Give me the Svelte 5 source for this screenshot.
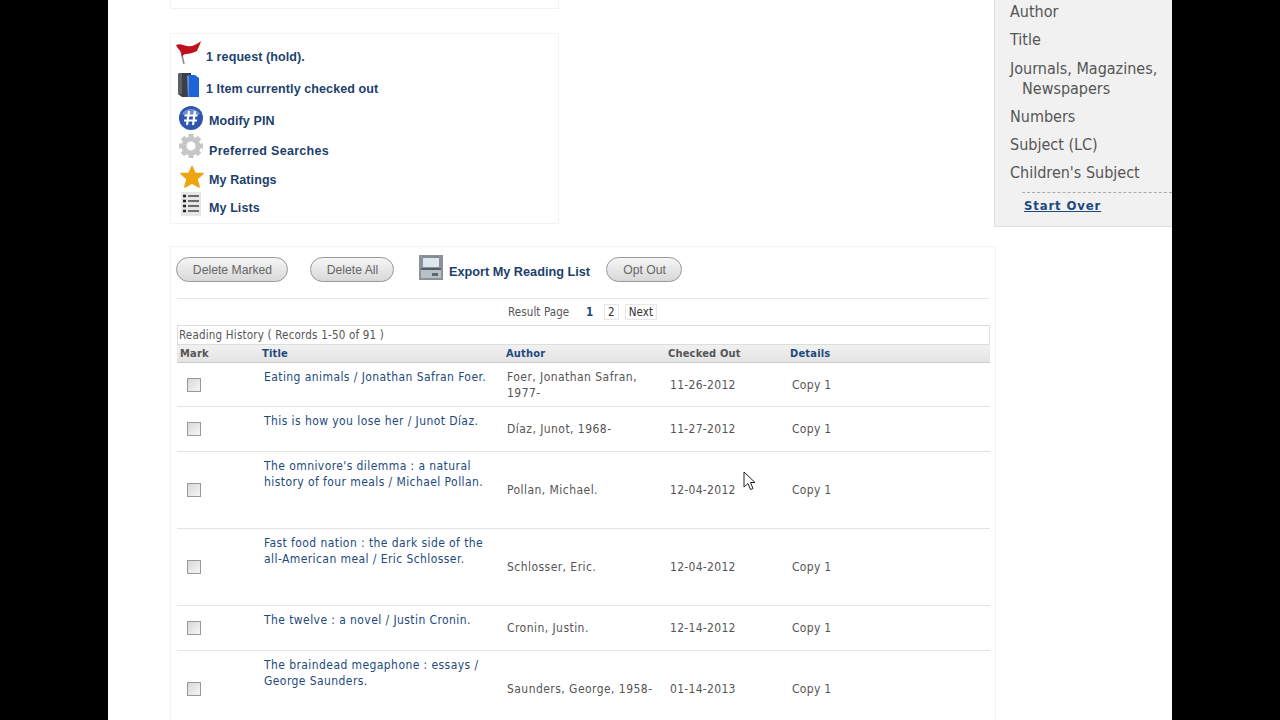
<script>
  const links = [
    { icon: 'flag', text: '1 request (hold).' },
    { icon: 'books', text: '1 Item currently checked out' },
    { icon: 'hash', text: 'Modify PIN' },
    { icon: 'gear', text: 'Preferred Searches' },
    { icon: 'star', text: 'My Ratings' },
    { icon: 'list', text: 'My Lists' }
  ];

  const rows = [
    { title: 'Eating animals / Jonathan Safran Foer.', author: 'Foer, Jonathan Safran, 1977-', date: '11-26-2012', size: 'r1' },
    { title: 'This is how you lose her / Junot Díaz.', author: 'Díaz, Junot, 1968-', date: '11-27-2012', size: 'r2' },
    { title: "The omnivore's dilemma : a natural history of four meals / Michael Pollan.", author: 'Pollan, Michael.', date: '12-04-2012', size: 'r3' },
    { title: 'Fast food nation : the dark side of the all-American meal / Eric Schlosser.', author: 'Schlosser, Eric.', date: '12-04-2012', size: 'r3' },
    { title: 'The twelve : a novel / Justin Cronin.', author: 'Cronin, Justin.', date: '12-14-2012', size: 'r2' },
    { title: 'The braindead megaphone : essays / George Saunders.', author: 'Saunders, George, 1958-', date: '01-14-2013', size: 'r3' }
  ];

  const searches = ['Author', 'Title', 'Journals, Magazines, Newspapers', 'Numbers', 'Subject (LC)', "Children's Subject"];
</script>

<div class="page">
  <div class="bar"></div>

  <main>
    <div class="content">
      <div class="card top-card">
        <span>Hello, Jay</span>
      </div>

      <ul class="card links">
        {#each links as link}
          <li>
            <span class="icon">
              {#if link.icon === 'flag'}
                <svg viewBox="0 0 26 24" width="26" height="24">
                  <path d="M5 10 8 23" stroke="#8f8f86" stroke-width="1.600" fill="none"/>
                  <path d="M0 4C4 2 7 4 11 5c5 1 9-1 14-5-1 4-3 7-4 10-4 2-8 3-11 3-2 0-3 1-4 3l-1-5C3 9 1 6 0 4z" fill="#c0101c"/>
                </svg>
              {:else if link.icon === 'books'}
                <svg viewBox="0 0 24 24" width="24" height="24">
                  <path d="M1 2q0-2 2-2h11v24H5l-4-3z" fill="#3c3f47"/>
                  <path d="M1 2q0-2 2-2h2v21H1z" fill="#5c5f66"/>
                  <path d="M10 3q0-1 1-1h7l4 3v19H11z" fill="#1f63d8"/>
                  <path d="M10 3h2v21h-1z" fill="#6d8fc8"/>
                </svg>
              {:else if link.icon === 'hash'}
                <svg viewBox="0 0 24 24" width="24" height="24">
                  <circle cx="12" cy="12" r="12" fill="#2f55b0"/>
                  <path d="M3 8a10 9 0 0 1 18 0c-5 2-13 2-18 0z" fill="#6f8fd6"/>
                  <path d="M10 5 8 19M16 5l-2 14M5.500 9.500h13M5 14.500h13" stroke="#fff" stroke-width="2.200" fill="none"/>
                </svg>
              {:else if link.icon === 'gear'}
                <svg viewBox="0 0 24 24" width="24" height="24">
                  <circle cx="12" cy="12" r="7" fill="none" stroke="#c6c6c6" stroke-width="5"/>
                  <path d="M12 0v5M12 19v5M0 12h5M19 12h5M3.500 3.500 7 7M17 17l3.500 3.500M20.500 3.500 17 7M7 17l-3.500 3.500" stroke="#c6c6c6" stroke-width="5" fill="none"/>
                </svg>
              {:else if link.icon === 'star'}
                <svg viewBox="0 0 24 24" width="24" height="24">
                  <path d="M12 1.500l3.200 7H23l-6 5.500 2.200 8L12 18l-7.200 4 2.200-8-6-5.500h7.800z" fill="#eba510" stroke="#eba510" stroke-width="1.500" stroke-linejoin="round"/>
                </svg>
              {:else}
                <svg viewBox="0 0 20 24" width="20" height="24">
                  <rect width="20" height="24" fill="#e6e6e6"/>
                  <path d="M7 4h11M7 9h11M7 14h11M7 19h11" stroke="#444" stroke-width="1.600"/>
                  <path d="M2 4h3M2 9h3M2 14h3M2 19h3" stroke="#222" stroke-width="2.600"/>
                </svg>
              {/if}
            </span>
            <a href="#top">{link.text}</a>
          </li>
        {/each}
      </ul>

      <section class="card history">
        <div class="actions">
          <button class="del-marked">Delete Marked</button>
          <button class="del-all">Delete All</button>
          <a href="#top" class="export">
            <svg viewBox="0 0 24 25" width="24" height="25">
              <rect width="24" height="25" fill="#8a939b"/>
              <rect x="4" y="1" width="16" height="11" fill="#dfe6ec"/>
              <rect x="4" y="1" width="16" height="2" fill="#7f8c98"/>
              <rect x="2" y="13" width="20" height="2" fill="#55606a"/>
              <rect x="2" y="15" width="20" height="8" fill="#b9c0c6"/>
              <rect x="13" y="18" width="6" height="3" fill="#5d6770"/>
            </svg>
            <span>Export My Reading List</span>
          </a>
          <button class="opt-out">Opt Out</button>
        </div>

        <div class="pager">
          <span class="result-label">Result Page</span>
          <span class="cur">1</span>
          <a href="#top" class="pg">2</a>
          <a href="#top" class="pg">Next</a>
        </div>

        <div class="caption">Reading History ( Records 1-50 of 91 )</div>

        <div class="grid head">
          <span>Mark</span>
          <a href="#top">Title</a>
          <a href="#top">Author</a>
          <span>Checked Out</span>
          <a href="#top">Details</a>
        </div>

        {#each rows as row}
          <div class="grid row {row.size}">
            <span class="check"><input type="checkbox" /></span>
            <a href="#top" class="title">{row.title}</a>
            <span class="author">{row.author}</span>
            <span class="plain">{row.date}</span>
            <span class="plain">Copy 1</span>
          </div>
        {/each}
      </section>
    </div>

    <aside>
      <ul>
        {#each searches as s}
          <li>{s}</li>
        {/each}
      </ul>
      <div class="over"><a href="#top">Start Over</a></div>
    </aside>

    <svg class="cursor" viewBox="0 0 13 20" width="13" height="20">
      <path d="M1 1v15l4-3.500 2.500 6 2.500-1-2.500-6H12z" fill="#fff" stroke="#222" stroke-width="1"/>
    </svg>
  </main>

  <div class="bar"></div>
</div>

<style>
  :global(body) {
    margin: 0;
    background: #000;
  }
  .page {
    display: grid;
    grid-template-columns: 108px 1fr 108px;
    height: 720px;
    overflow: hidden;
  }
  .bar {
    background: #000;
  }
  main {
    position: relative;
    display: flex;
    background: #fff;
    padding-left: 62px;
    height: 720px;
    overflow: hidden;
    font-family: "DejaVu Sans", sans-serif;
    color: #555;
  }
  a {
    color: #1d4a7d;
    text-decoration: none;
  }
  ul {
    list-style: none;
    margin: 0;
    padding: 0;
  }
  .content {
    width: 826px;
    flex: none;
  }
  .card {
    box-sizing: border-box;
    border: 1px solid #f3f3f3;
  }

  /* kortet som är nästan utanför bild */
  .top-card {
    width: 389px;
    height: 28px;
    margin-top: -19px;
    padding: 3px 0 0 16px;
    font: bold 12px "Liberation Sans", sans-serif;
    color: #333;
  }

  .links {
    width: 389px;
    height: 191px;
    margin-top: 24px;
    padding: 7px 0 0 5px;
  }
  .links li {
    display: flex;
    align-items: flex-start;
    height: 32px;
  }
  .links li:nth-child(2) { height: 33px; }
  .links li:nth-child(3) { height: 28px; padding-left: 3px; }
  .links li:nth-child(4) { height: 31px; padding-left: 3px; }
  .links li:nth-child(5) { height: 27px; padding-left: 4px; }
  .links li:nth-child(6) { height: 28px; padding-left: 5px; }
  .links .icon {
    flex: none;
    width: 30px;
    display: block;
    line-height: 0;
  }
  .links li:nth-child(2) .icon { padding-left: 1px; width: 29px; }
  .links li:nth-child(5) .icon { width: 29px; }
  .links li:nth-child(6) .icon { width: 28px; }
  .links a {
    font: bold 12.500px/14px "Liberation Sans", sans-serif;
    letter-spacing: 0.1px;
    color: #1c3f6e;
    margin-top: 9px;
  }
  .links li:nth-child(3) a { margin-top: 8px; }
  .links li:nth-child(4) a { margin-top: 10px; letter-spacing: 0.3px; }
  .links li:nth-child(5) a { margin-top: 8px; }

  .history {
    width: 826px;
    margin-top: 22px;
    padding: 0 6px;
    height: 500px;
  }
  .actions {
    display: flex;
    align-items: flex-start;
    height: 52px;
    border-bottom: 1px solid #e3e3e3;
    padding-top: 10px;
    box-sizing: border-box;
  }
  button {
    height: 25px;
    border: 1px solid #999;
    border-radius: 13px;
    background: linear-gradient(#f6f6f6, #d8d8d8);
    color: #666;
    font: 12.200px "Liberation Sans", sans-serif;
    padding: 0 0 0 1px;
  }
  .del-marked { width: 112px; margin-left: -1px; }
  .del-all { width: 84px; margin-left: 22px; }
  .opt-out { width: 76px; margin-left: 16px; }
  .export {
    display: flex;
    align-items: center;
    gap: 6px;
    margin-left: 25px;
    margin-top: -2px;
    font: bold 12.700px "Liberation Sans", sans-serif;
    color: #1c3f6e;
  }
  .export span {
    margin-top: 8px;
  }
  .pager {
    display: flex;
    align-items: center;
    height: 26px;
    padding-left: 331px;
    font-size: 11.500px;
    font-stretch: condensed;
    letter-spacing: 0.1px;
  }
  .result-label {
    width: 78px;
  }
  .cur {
    width: 18px;
    color: #1d4a7d;
    font-weight: bold;
  }
  .pg {
    border: 1px solid #e8e8e8;
    padding: 0 3px;
    margin-right: 6px;
    color: #333;
  }
  .caption {
    box-sizing: border-box;
    height: 20px;
    width: 813px;
    border: 1px solid #ddd;
    font-size: 11.500px;
    letter-spacing: 0.2px;
    line-height: 19px;
    padding-left: 1px;
    font-stretch: condensed;
  }
  .grid {
    display: grid;
    width: 813px;
    box-sizing: border-box;
    font-size: 12px;
    font-stretch: condensed;
    padding-left: 3px;
  }
  .head {
    grid-template-columns: 82px 244px 162px 122px 1fr;
    height: 18px;
    align-items: center;
    background: linear-gradient(#f1f1f1, #e3e3e3);
    border-bottom: 1px solid #ccc;
    font-size: 11px;
    letter-spacing: 0.2px;
    font-weight: bold;
  }
  .row {
    grid-template-columns: 84px 243px 163px 122px 1fr;
    align-items: center;
    line-height: 16px;
    border-bottom: 1px solid #e3e3e3;
  }
  .r1 { height: 44px; }
  .r2 { height: 45px; }
  .r3 { height: 77px; }
  .title {
    align-self: start;
    padding-top: 6px;
    padding-right: 6px;
    letter-spacing: 0.42px;
  }
  .author {
    padding-right: 6px;
    letter-spacing: 0.45px;
  }
  .plain {
    letter-spacing: 0.3px;
  }
  .check {
    padding-left: 7px;
  }
  .check input {
    appearance: none;
    box-sizing: border-box;
    width: 14px;
    height: 14px;
    margin: 0;
    display: block;
    border: 1px solid #999;
    background: linear-gradient(135deg, #d8d8d8, #f6f6f6);
  }

  aside {
    flex: none;
    box-sizing: border-box;
    width: 178px;
    height: 227px;
    margin-left: -2px;
    background: #f1f1f1;
    border-left: 1px solid #ddd;
    border-bottom: 1px solid #ddd;
    font-size: 16px;
    font-stretch: condensed;
    color: #555;
  }
  aside ul {
    padding-left: 15px;
  }
  aside li {
    line-height: 20px;
    margin-top: 8px;
    padding-left: 12px;
    text-indent: -12px;
  }
  aside li:first-child {
    margin-top: 2px;
  }
  aside li:nth-child(3) {
    margin-top: 9px;
  }
  .over {
    margin: 9px 0 0 27px;
    padding: 5px 0 0 2px;
    border-top: 1px dashed #aaa;
    font-size: 13px;
    font-weight: bold;
    letter-spacing: 0.85px;
  }
  .over a {
    text-decoration: underline;
  }

  .cursor {
    position: absolute;
    left: 635px;
    top: 471px;
  }
</style>
